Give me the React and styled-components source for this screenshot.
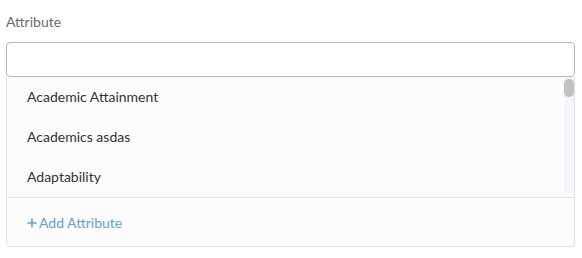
import React from "react";
import styled, { createGlobalStyle } from "styled-components";

const GlobalStyle = createGlobalStyle`
  html, body {
    margin: 0;
    padding: 0;
    background: #ffffff;
  }
  body {
    font-family: Lato, "Open Sans", sans-serif;
  }
`;

const Field = styled.div`
  padding: 12px 7px 0 6px;
  display: flex;
  flex-direction: column;
`;

const Label = styled.label`
  font-size: 14px;
  color: #6b6b6b;
  line-height: 20px;
  margin-bottom: 10px;
`;

const SearchInput = styled.input`
  box-sizing: border-box;
  height: 35px;
  width: 100%;
  border: 1px solid #b8b8b8;
  border-radius: 4px;
  padding: 0 10px;
  font-family: inherit;
  font-size: 14px;
  outline: none;
`;

const Dropdown = styled.div`
  border: 1px solid #e2e2e2;
  border-top: none;
  border-radius: 0 0 4px 4px;
  background: #fcfcfc;
`;

const ListWrap = styled.div`
  position: relative;
  border-bottom: 1px solid #e2e2e2;
`;

const List = styled.ul`
  list-style: none;
  margin: 0;
  padding: 0;
  height: 120px;
  overflow-y: scroll;
  scrollbar-width: none;

  &::-webkit-scrollbar {
    display: none;
  }
`;

const ScrollTrack = styled.div`
  position: absolute;
  top: 0;
  right: 0;
  width: 10px;
  height: 116px;
  background: #f4f5f8;
`;

const ScrollThumb = styled.div`
  margin-top: 2px;
  height: 18px;
  width: 10px;
  border-radius: 5px;
  background: #c1c1c1;
`;

const Item = styled.li`
  height: 40px;
  line-height: 40px;
  padding-left: 20px;
  font-size: 14px;
  color: #333333;
`;

const Footer = styled.div`
  height: 48px;
  display: flex;
  align-items: center;
  padding-left: 20px;
  font-size: 14px;
  color: #5aa2d6;
`;

const PlusIcon = styled.svg`
  width: 10px;
  height: 10px;
  margin-right: 2px;
  margin-top: 1px;
`;

const attributes = [
  "Academic Attainment",
  "Academics asdas",
  "Adaptability",
  "Analytical Thinking",
  "Attention to Detail",
  "Communication",
  "Creativity",
  "Critical Thinking",
  "Decision Making",
  "Empathy",
  "Flexibility",
  "Integrity",
  "Leadership",
  "Motivation",
  "Organisation",
  "Problem Solving",
  "Resilience",
  "Teamwork",
  "Time Management",
  "Work Ethic",
];

export default function App() {
  return (
    <>
      <GlobalStyle />
      <Field>
        <Label>Attribute</Label>
        <SearchInput type="text" />
        <Dropdown>
          <ListWrap>
            <List>
              {attributes.map((a) => (
                <Item key={a}>{a}</Item>
              ))}
            </List>
            <ScrollTrack>
              <ScrollThumb />
            </ScrollTrack>
          </ListWrap>
          <Footer>
            <PlusIcon viewBox="0 0 10 10">
              <path d="M5 0.5V9.5M0.5 5H9.5" stroke="#5aa2d6" strokeWidth="1.6" fill="none" />
            </PlusIcon>
            Add Attribute
          </Footer>
        </Dropdown>
      </Field>
    </>
  );
}
